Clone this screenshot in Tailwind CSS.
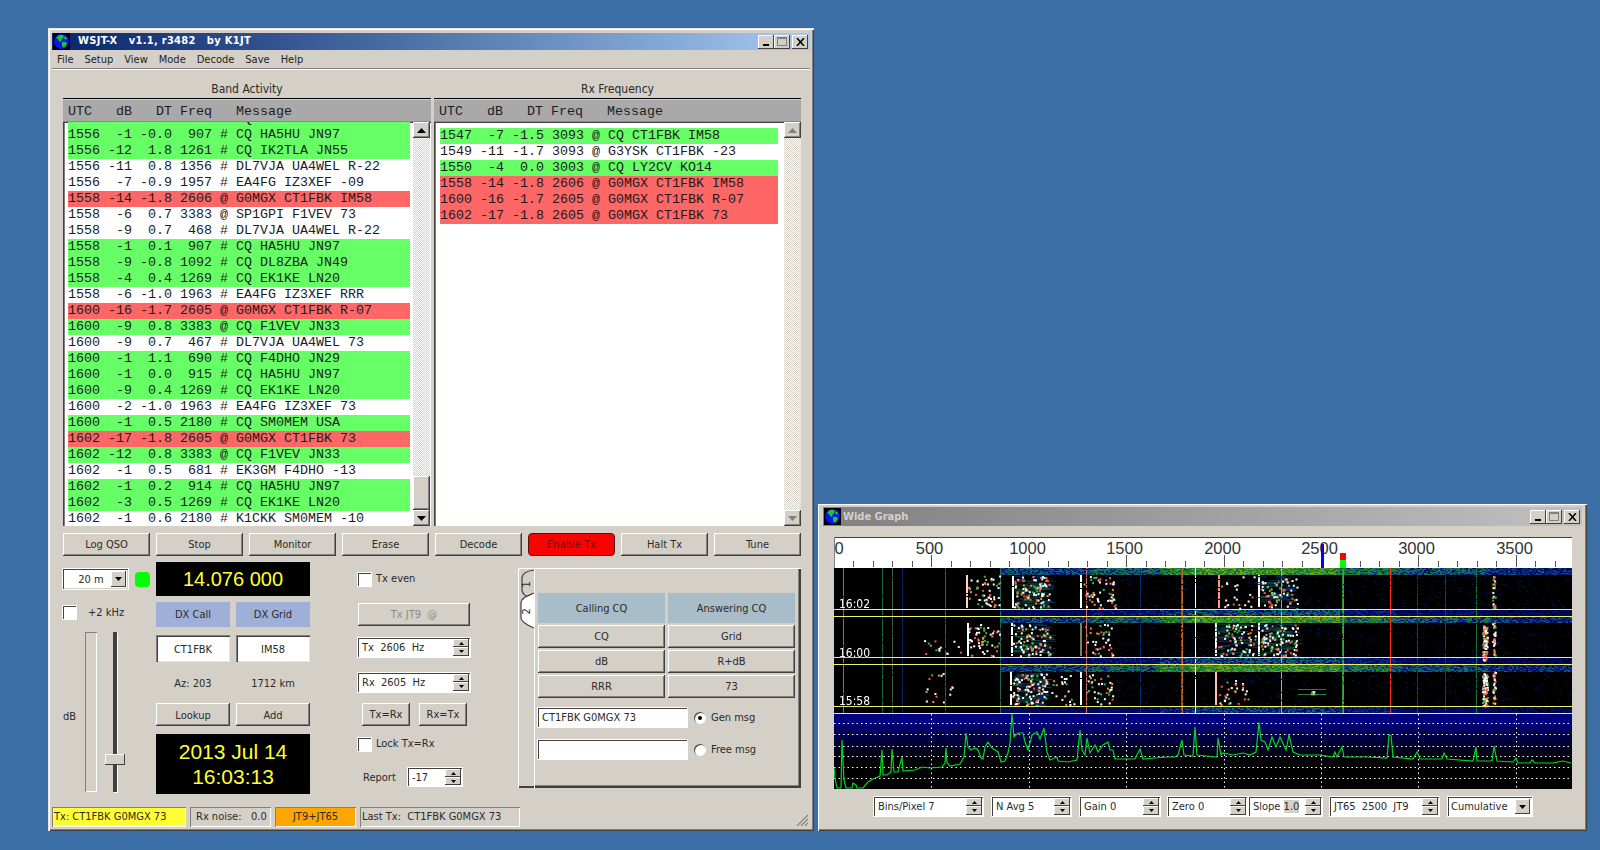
<!DOCTYPE html>
<html lang="en">
<head>
  <meta charset="UTF-8" />
  <title>WSJT-X v1.1, r3482 by K1JT</title>
  <script src="https://cdn.jsdelivr.net/npm/@tailwindcss/browser@4"></script>
</head>
<body class="relative h-[850px] w-[1600px] overflow-hidden bg-[#3a6ea5] font-['DejaVu_Sans_Condensed','Liberation_Sans',sans-serif] text-[11px] text-[#2a2a2a]">

  <!-- main window -->
  <div class="absolute left-[48px] top-[28px] flex h-[803px] w-[766px] flex-col bg-[#d4d0c8] pl-[4px] pr-[4px] pt-[5px] shadow-[inset_1px_1px_0_#e8e6e0,inset_2px_2px_0_#fff,inset_-1px_-1px_0_#404040,inset_-2px_-2px_0_#808080]">
    <div class="flex h-[17px] items-center bg-linear-to-r from-[#0a246a] to-[#a6caf0] pr-[2px]">
      <svg class="ml-[1px] h-[17px] w-[17px]" viewBox="0 0 17 17"><rect width="17" height="17" fill="#000"/><circle cx="8.5" cy="8.5" r="7.5" fill="#0a14e0"/><path d="M3 5l3-3 4 0 1 2-2 2-1 3-2-1-1-2zM9 9l4 0 1 2-3 4-2-2zM12 3l2 2-1 2-2-2z" fill="#16c832"/></svg>
      <span class="ml-[8px] whitespace-pre text-[11px] font-bold tracking-[0.3px] text-white">WSJT-X   v1.1, r3482   by K1JT</span>
      <div class="ml-auto flex">
        <div class="flex h-[14px] w-[16px] items-end justify-center bg-[#d4d0c8] pb-[3px] shadow-[inset_-1px_-1px_0_#404040,inset_1px_1px_0_#fff]"><div class="h-[2px] w-[6px] bg-black"></div></div>
        <div class="flex h-[14px] w-[16px] items-center justify-center bg-[#d4d0c8] shadow-[inset_-1px_-1px_0_#404040,inset_1px_1px_0_#fff]"><div class="h-[9px] w-[10px] border border-t-2 border-[#808080]"></div></div>
        <div class="ml-[2px] flex h-[14px] w-[16px] items-center justify-center bg-[#d4d0c8] shadow-[inset_-1px_-1px_0_#404040,inset_1px_1px_0_#fff]"><svg width="9" height="8" viewBox="0 0 9 8"><path d="M1 0l7 8M8 0l-7 8" stroke="#000" stroke-width="1.5"/></svg></div>
      </div>
    </div>
    <div class="flex h-[19px] items-center gap-[11px] border-b border-b-[#808080] pl-[5px] pt-[3px] text-[#222] shadow-[0_1px_0_#fff]">
      <span>File</span><span>Setup</span><span>View</span><span>Mode</span><span>Decode</span><span>Save</span><span>Help</span>
    </div>

    <div class="flex flex-1 flex-col pl-[11px] pr-[9px]">
      <div class="mt-[10px] flex h-[19px] items-center text-[12px]">
        <div class="w-[368px] text-center">Band Activity</div>
        <div class="ml-[3px] w-[367px] text-center">Rx Frequency</div>
      </div>

      <!-- decode tables -->
      <div class="flex h-[428px] gap-[3px] font-['Liberation_Mono',monospace] text-[13.33px] leading-[16px] text-[#1c1c1c]">
        <div class="flex w-[368px] flex-col border-t border-t-black">
          <div class="flex h-[23px] items-center whitespace-pre bg-[#a9a9a9] pl-[5px] pt-[2px] shadow-[inset_0_1px_0_#d4d0c8,inset_0_-1px_0_#8a8a8a]">UTC   dB   DT Freq   Message</div>
          <div class="flex min-h-0 flex-1 bg-white shadow-[inset_1px_1px_0_#404040,inset_2px_0_0_#808080]">
            <div class="ml-[5px] flex w-[342px] flex-col overflow-hidden whitespace-pre">
              <div class="mt-[-11px] flex shrink-0 flex-col">
                <div class="bg-[#66ff66]">1556  -9  0.4 1269 # CQ EK1KE LN20</div>
                <div class="bg-[#66ff66]">1556  -1 -0.0  907 # CQ HA5HU JN97</div>
                <div class="bg-[#66ff66]">1556 -12  1.8 1261 # CQ IK2TLA JN55</div>
                <div>1556 -11  0.8 1356 # DL7VJA UA4WEL R-22</div>
                <div>1556  -7 -0.9 1957 # EA4FG IZ3XEF -09</div>
                <div class="bg-[#ff6666]">1558 -14 -1.8 2606 @ G0MGX CT1FBK IM58</div>
                <div>1558  -6  0.7 3383 @ SP1GPI F1VEV 73</div>
                <div>1558  -9  0.7  468 # DL7VJA UA4WEL R-22</div>
                <div class="bg-[#66ff66]">1558  -1  0.1  907 # CQ HA5HU JN97</div>
                <div class="bg-[#66ff66]">1558  -9 -0.8 1092 # CQ DL8ZBA JN49</div>
                <div class="bg-[#66ff66]">1558  -4  0.4 1269 # CQ EK1KE LN20</div>
                <div>1558  -6 -1.0 1963 # EA4FG IZ3XEF RRR</div>
                <div class="bg-[#ff6666]">1600 -16 -1.7 2605 @ G0MGX CT1FBK R-07</div>
                <div class="bg-[#66ff66]">1600  -9  0.8 3383 @ CQ F1VEV JN33</div>
                <div>1600  -9  0.7  467 # DL7VJA UA4WEL 73</div>
                <div class="bg-[#66ff66]">1600  -1  1.1  690 # CQ F4DHO JN29</div>
                <div class="bg-[#66ff66]">1600  -1  0.0  915 # CQ HA5HU JN97</div>
                <div class="bg-[#66ff66]">1600  -9  0.4 1269 # CQ EK1KE LN20</div>
                <div>1600  -2 -1.0 1963 # EA4FG IZ3XEF 73</div>
                <div class="bg-[#66ff66]">1600  -1  0.5 2180 # CQ SM0MEM USA</div>
                <div class="bg-[#ff6666]">1602 -17 -1.8 2605 @ G0MGX CT1FBK 73</div>
                <div class="bg-[#66ff66]">1602 -12  0.8 3383 @ CQ F1VEV JN33</div>
                <div>1602  -1  0.5  681 # EK3GM F4DHO -13</div>
                <div class="bg-[#66ff66]">1602  -1  0.2  914 # CQ HA5HU JN97</div>
                <div class="bg-[#66ff66]">1602  -3  0.5 1269 # CQ EK1KE LN20</div>
                <div>1602  -1  0.6 2180 # K1CKK SM0MEM -10</div>
              </div>
            </div>
            <div class="ml-auto mr-[1px] flex w-[17px] flex-col bg-[repeating-conic-gradient(#fff_0_25%,#d4d0c8_0_50%)] bg-[length:2px_2px]">
              <div class="flex h-[16px] items-center justify-center bg-[#d4d0c8] shadow-[inset_-1px_-1px_0_#404040,inset_1px_1px_0_#fff,inset_-2px_-2px_0_#808080]"><svg width="9" height="5"><path d="M4.5 0L9 5H0z" fill="#000"/></svg></div>
              <div class="flex-1"></div>
              <div class="h-[34px] bg-[#d4d0c8] shadow-[inset_-1px_-1px_0_#404040,inset_1px_1px_0_#fff,inset_-2px_-2px_0_#808080]"></div>
              <div class="flex h-[16px] items-center justify-center bg-[#d4d0c8] shadow-[inset_-1px_-1px_0_#404040,inset_1px_1px_0_#fff,inset_-2px_-2px_0_#808080]"><svg width="9" height="5"><path d="M4.5 5L9 0H0z" fill="#000"/></svg></div>
            </div>
          </div>
        </div>

        <div class="flex w-[367px] flex-col border-t border-t-black">
          <div class="flex h-[23px] items-center whitespace-pre bg-[#a9a9a9] pl-[5px] pt-[2px] shadow-[inset_0_1px_0_#d4d0c8,inset_0_-1px_0_#8a8a8a]">UTC   dB   DT Freq   Message</div>
          <div class="flex min-h-0 flex-1 bg-white shadow-[inset_1px_1px_0_#404040,inset_2px_0_0_#808080]">
            <div class="ml-[6px] mt-[6px] flex h-[96px] w-[338px] flex-col whitespace-pre">
              <div class="bg-[#66ff66]">1547  -7 -1.5 3093 @ CQ CT1FBK IM58</div>
              <div>1549 -11 -1.7 3093 @ G3YSK CT1FBK -23</div>
              <div class="bg-[#66ff66]">1550  -4  0.0 3003 @ CQ LY2CV KO14</div>
              <div class="bg-[#ff6666]">1558 -14 -1.8 2606 @ G0MGX CT1FBK IM58</div>
              <div class="bg-[#ff6666]">1600 -16 -1.7 2605 @ G0MGX CT1FBK R-07</div>
              <div class="bg-[#ff6666]">1602 -17 -1.8 2605 @ G0MGX CT1FBK 73</div>
            </div>
            <div class="ml-auto flex w-[17px] flex-col bg-[repeating-conic-gradient(#fff_0_25%,#d4d0c8_0_50%)] bg-[length:2px_2px]">
              <div class="flex h-[16px] items-center justify-center bg-[#d4d0c8] shadow-[inset_-1px_-1px_0_#404040,inset_1px_1px_0_#fff,inset_-2px_-2px_0_#808080]"><svg width="9" height="5"><path d="M4.5 0L9 5H0z" fill="#808080"/></svg></div>
              <div class="flex-1"></div>
              <div class="flex h-[16px] items-center justify-center bg-[#d4d0c8] shadow-[inset_-1px_-1px_0_#404040,inset_1px_1px_0_#fff,inset_-2px_-2px_0_#808080]"><svg width="9" height="5"><path d="M4.5 5L9 0H0z" fill="#808080"/></svg></div>
            </div>
          </div>
        </div>
      </div>

      <!-- button row -->
      <div class="mt-[7px] grid h-[23px] grid-cols-8 gap-[6px]">
        <div class="flex items-center justify-center bg-[#d4d0c8] pt-[2px] shadow-[inset_-1px_-1px_0_#404040,inset_1px_1px_0_#fff,inset_-2px_-2px_0_#808080]">Log QSO</div>
        <div class="flex items-center justify-center bg-[#d4d0c8] pt-[2px] shadow-[inset_-1px_-1px_0_#404040,inset_1px_1px_0_#fff,inset_-2px_-2px_0_#808080]">Stop</div>
        <div class="flex items-center justify-center bg-[#d4d0c8] pt-[2px] shadow-[inset_-1px_-1px_0_#404040,inset_1px_1px_0_#fff,inset_-2px_-2px_0_#808080]">Monitor</div>
        <div class="flex items-center justify-center bg-[#d4d0c8] pt-[2px] shadow-[inset_-1px_-1px_0_#404040,inset_1px_1px_0_#fff,inset_-2px_-2px_0_#808080]">Erase</div>
        <div class="flex items-center justify-center bg-[#d4d0c8] pt-[2px] shadow-[inset_-1px_-1px_0_#404040,inset_1px_1px_0_#fff,inset_-2px_-2px_0_#808080]">Decode</div>
        <div class="flex items-center justify-center rounded-[4px] border border-[#5a1010] bg-[#ff0000] pt-[2px] text-[#6a1010]">Enable Tx</div>
        <div class="flex items-center justify-center bg-[#d4d0c8] pt-[2px] shadow-[inset_-1px_-1px_0_#404040,inset_1px_1px_0_#fff,inset_-2px_-2px_0_#808080]">Halt Tx</div>
        <div class="flex items-center justify-center bg-[#d4d0c8] pt-[2px] shadow-[inset_-1px_-1px_0_#404040,inset_1px_1px_0_#fff,inset_-2px_-2px_0_#808080]">Tune</div>
      </div>

      <!-- lower controls -->
      <div class="mt-[6px] flex h-[240px]">
        <div class="flex w-[87px] flex-col">
          <div class="mt-[7px] flex items-center">
            <div class="flex h-[20px] w-[65px] items-center bg-white shadow-[inset_1px_1px_0_#404040,inset_-1px_-1px_0_#d4d0c8,0_0_0_1px_#fff]">
              <span class="flex-1 pl-[8px] pt-[2px] text-center">20 m</span>
              <div class="mr-[2px] flex h-[16px] w-[15px] items-center justify-center bg-[#d4d0c8] shadow-[inset_-1px_-1px_0_#404040,inset_1px_1px_0_#fff]"><svg width="7" height="4"><path d="M0 0h7L3.5 4z" fill="#000"/></svg></div>
            </div>
            <div class="ml-[7px] h-[15px] w-[15px] rounded-[4px] bg-[#00ff00]"></div>
          </div>
          <div class="mt-[16px] flex h-[15px] items-center">
            <div class="h-[13px] w-[13px] bg-white shadow-[inset_1px_1px_0_#404040,0_0_0_1px_#fff]"></div>
            <span class="ml-[12px] pt-[1px]">+2 kHz</span>
          </div>
          <div class="mt-[12px] flex h-[160px] items-stretch">
            <div class="flex w-[22px] items-center pt-[10px]">dB</div>
            <div class="h-full w-[12px] shadow-[inset_1px_1px_0_#808080,inset_-1px_-1px_0_#fff]"></div>
            <div class="relative ml-[16px] h-full w-[4px] bg-[#404040] shadow-[1px_1px_0_#fff]">
              <div class="absolute left-[-8px] top-[122px] h-[11px] w-[20px] bg-[#d4d0c8] shadow-[inset_-1px_-1px_0_#404040,inset_1px_1px_0_#fff]"></div>
            </div>
          </div>
        </div>

        <div class="ml-[6px] flex w-[154px] flex-col">
          <div class="flex h-[34px] items-center justify-center bg-black font-['Liberation_Sans',sans-serif] text-[20px] text-[#ffff33]">14.076 000</div>
          <div class="mt-[6px] flex h-[25px] gap-[6px]">
            <div class="flex w-[74px] items-center justify-center bg-[#9eb0d8] pt-[2px]">DX Call</div>
            <div class="flex w-[74px] items-center justify-center bg-[#9eb0d8] pt-[2px]">DX Grid</div>
          </div>
          <div class="mt-[8px] flex h-[27px] gap-[6px]">
            <div class="flex w-[74px] items-center justify-center bg-white pt-[3px] shadow-[inset_1px_1px_0_#808080,inset_2px_2px_0_#404040,inset_-1px_-1px_0_#e8e6e0]">CT1FBK</div>
            <div class="flex w-[74px] items-center justify-center bg-white pt-[3px] shadow-[inset_1px_1px_0_#808080,inset_2px_2px_0_#404040,inset_-1px_-1px_0_#e8e6e0]">IM58</div>
          </div>
          <div class="flex h-[41px] gap-[6px]">
            <div class="flex w-[74px] items-center justify-center pt-[3px]">Az: 203</div>
            <div class="flex w-[74px] items-center justify-center pt-[3px]">1712 km</div>
          </div>
          <div class="flex h-[23px] gap-[6px]">
            <div class="flex w-[74px] items-center justify-center bg-[#d4d0c8] pt-[3px] shadow-[inset_-1px_-1px_0_#404040,inset_1px_1px_0_#fff,inset_-2px_-2px_0_#808080]">Lookup</div>
            <div class="flex w-[74px] items-center justify-center bg-[#d4d0c8] pt-[3px] shadow-[inset_-1px_-1px_0_#404040,inset_1px_1px_0_#fff,inset_-2px_-2px_0_#808080]">Add</div>
          </div>
          <div class="mt-[8px] flex h-[60px] flex-col items-center justify-center bg-black font-['Liberation_Sans',sans-serif] text-[21px] leading-[25px] text-[#ffff33]">
            <div>2013 Jul 14</div>
            <div>16:03:13</div>
          </div>
        </div>

        <div class="ml-[48px] flex w-[112px] flex-col">
          <div class="mt-[11px] flex h-[13px] items-center">
            <div class="h-[13px] w-[13px] bg-white shadow-[inset_1px_1px_0_#404040,0_0_0_1px_#fff]"></div>
            <span class="ml-[5px]">Tx even</span>
          </div>
          <div class="mt-[17px] flex h-[23px] items-center justify-center whitespace-pre bg-[#d4d0c8] pt-[2px] text-[#8a8a8a] shadow-[inset_-1px_-1px_0_#404040,inset_1px_1px_0_#fff,inset_-2px_-2px_0_#808080]">Tx JT9  @</div>
          <div class="mt-[12px] flex h-[19px] items-center bg-white shadow-[inset_1px_1px_0_#404040,0_0_0_1px_#fff]">
            <span class="flex-1 whitespace-pre pl-[4px] pt-[2px]">Tx  2606  Hz</span>
            <div class="mr-[1px] flex w-[16px] flex-col">
              <div class="flex h-[8px] items-center justify-center bg-[#d4d0c8] shadow-[inset_-1px_-1px_0_#404040,inset_1px_1px_0_#fff]"><svg width="5" height="3"><path d="M2.5 0L5 3H0z" fill="#000"/></svg></div>
              <div class="flex h-[9px] items-center justify-center bg-[#d4d0c8] shadow-[inset_-1px_-1px_0_#404040,inset_1px_1px_0_#fff]"><svg width="5" height="3"><path d="M2.5 3L5 0H0z" fill="#000"/></svg></div>
            </div>
          </div>
          <div class="mt-[16px] flex h-[19px] items-center bg-white shadow-[inset_1px_1px_0_#404040,0_0_0_1px_#fff]">
            <span class="flex-1 whitespace-pre pl-[4px] pt-[2px]">Rx  2605  Hz</span>
            <div class="mr-[1px] flex w-[16px] flex-col">
              <div class="flex h-[8px] items-center justify-center bg-[#d4d0c8] shadow-[inset_-1px_-1px_0_#404040,inset_1px_1px_0_#fff]"><svg width="5" height="3"><path d="M2.5 0L5 3H0z" fill="#000"/></svg></div>
              <div class="flex h-[9px] items-center justify-center bg-[#d4d0c8] shadow-[inset_-1px_-1px_0_#404040,inset_1px_1px_0_#fff]"><svg width="5" height="3"><path d="M2.5 3L5 0H0z" fill="#000"/></svg></div>
            </div>
          </div>
          <div class="mt-[11px] flex h-[23px] gap-[9px] pl-[4px]">
            <div class="flex w-[48px] items-center justify-center bg-[#d4d0c8] pt-[2px] shadow-[inset_-1px_-1px_0_#404040,inset_1px_1px_0_#fff,inset_-2px_-2px_0_#808080]">Tx=Rx</div>
            <div class="flex w-[48px] items-center justify-center bg-[#d4d0c8] pt-[2px] shadow-[inset_-1px_-1px_0_#404040,inset_1px_1px_0_#fff,inset_-2px_-2px_0_#808080]">Rx=Tx</div>
          </div>
          <div class="mt-[12px] flex h-[13px] items-center">
            <div class="h-[13px] w-[13px] bg-white shadow-[inset_1px_1px_0_#404040,0_0_0_1px_#fff]"></div>
            <span class="ml-[5px]">Lock Tx=Rx</span>
          </div>
          <div class="mt-[17px] flex items-center">
            <span class="ml-[5px] w-[45px] pt-[2px]">Report</span>
            <div class="flex h-[18px] w-[54px] items-center bg-white shadow-[inset_1px_1px_0_#404040,0_0_0_1px_#fff]">
              <span class="flex-1 pl-[4px] pt-[2px]">-17</span>
              <div class="mr-[1px] flex w-[16px] flex-col">
                <div class="flex h-[8px] items-center justify-center bg-[#d4d0c8] shadow-[inset_-1px_-1px_0_#404040,inset_1px_1px_0_#fff]"><svg width="5" height="3"><path d="M2.5 0L5 3H0z" fill="#000"/></svg></div>
                <div class="flex h-[8px] items-center justify-center bg-[#d4d0c8] shadow-[inset_-1px_-1px_0_#404040,inset_1px_1px_0_#fff]"><svg width="5" height="3"><path d="M2.5 3L5 0H0z" fill="#000"/></svg></div>
              </div>
            </div>
          </div>
        </div>

        <!-- message tab widget -->
        <div class="ml-[48px] mt-[6px] flex h-[220px] w-[283px] shadow-[inset_1px_1px_0_#fff,inset_-1px_-1px_0_#404040]">
          <div class="relative w-[16px] shrink-0 shadow-[inset_1px_1px_0_#fff,inset_0_-2px_0_#404040]">
            <svg class="absolute left-0 top-0" width="17" height="64" viewBox="0 0 17 64">
              <path d="M16 2C9 3 4 6 4 10V22C4 26 9 29 12 30" fill="#d4d0c8" stroke="#404040" stroke-width="1.2"/>
              <path d="M16 25C9 28 3 30 3 35V50C3 54 9 57 16 60V25z" fill="#fff"/>
              <path d="M16 25C9 28 3 30 3 35V50C3 54 9 57 16 60" fill="none" stroke="#404040" stroke-width="1.2"/>
            </svg>
            <span class="absolute left-[6px] top-[8px] -rotate-90">1</span>
            <span class="absolute left-[6px] top-[35px] -rotate-90">2</span>
          </div>
          <div class="flex flex-1 flex-col pl-[4px] pr-[5px] pt-[25px] shadow-[inset_1px_1px_0_#fff,inset_-2px_-2px_0_#404040,inset_-3px_-3px_0_#808080]">
            <div class="flex h-[30px] gap-[3px]">
              <div class="flex w-[127px] items-center justify-center bg-[#a9bdc8] pt-[2px]">Calling CQ</div>
              <div class="flex w-[127px] items-center justify-center bg-[#a9bdc8] pt-[2px]">Answering CQ</div>
            </div>
            <div class="mt-[2px] grid auto-rows-[23px] grid-cols-[127px_127px] gap-x-[3px] gap-y-[2px]">
              <div class="flex items-center justify-center bg-[#d4d0c8] pt-[2px] shadow-[inset_-1px_-1px_0_#404040,inset_1px_1px_0_#fff,inset_-2px_-2px_0_#808080]">CQ</div>
              <div class="flex items-center justify-center bg-[#d4d0c8] pt-[2px] shadow-[inset_-1px_-1px_0_#404040,inset_1px_1px_0_#fff,inset_-2px_-2px_0_#808080]">Grid</div>
              <div class="flex items-center justify-center bg-[#d4d0c8] pt-[2px] shadow-[inset_-1px_-1px_0_#404040,inset_1px_1px_0_#fff,inset_-2px_-2px_0_#808080]">dB</div>
              <div class="flex items-center justify-center bg-[#d4d0c8] pt-[2px] shadow-[inset_-1px_-1px_0_#404040,inset_1px_1px_0_#fff,inset_-2px_-2px_0_#808080]">R+dB</div>
              <div class="flex items-center justify-center bg-[#d4d0c8] pt-[2px] shadow-[inset_-1px_-1px_0_#404040,inset_1px_1px_0_#fff,inset_-2px_-2px_0_#808080]">RRR</div>
              <div class="flex items-center justify-center bg-[#d4d0c8] pt-[2px] shadow-[inset_-1px_-1px_0_#404040,inset_1px_1px_0_#fff,inset_-2px_-2px_0_#808080]">73</div>
            </div>
            <div class="mt-[10px] flex h-[19px] items-center">
              <div class="flex h-full w-[149px] items-center bg-white pl-[4px] pt-[2px] shadow-[inset_1px_1px_0_#404040,0_0_0_1px_#fff]">CT1FBK G0MGX 73</div>
              <div class="ml-[7px] flex h-[12px] w-[12px] items-center justify-center rounded-full bg-white shadow-[inset_1px_1px_0_#404040]"><div class="h-[4px] w-[4px] rounded-full bg-black"></div></div>
              <span class="ml-[5px] pt-[2px]">Gen msg</span>
            </div>
            <div class="mt-[13px] flex h-[19px] items-center">
              <div class="h-full w-[149px] bg-white shadow-[inset_1px_1px_0_#404040,0_0_0_1px_#fff]"></div>
              <div class="ml-[7px] h-[12px] w-[12px] rounded-full bg-white shadow-[inset_1px_1px_0_#404040]"></div>
              <span class="ml-[5px] pt-[2px]">Free msg</span>
            </div>
          </div>
        </div>
      </div>
    </div>

    <!-- status bar -->
    <div class="relative mb-[4px] flex h-[20px] gap-[4px]">
      <div class="flex w-[134px] items-center whitespace-pre bg-[#ffff33] pl-[2px] shadow-[inset_1px_1px_0_#808080,inset_-1px_-1px_0_#fff]">Tx: CT1FBK G0MGX 73</div>
      <div class="flex w-[81px] items-center whitespace-pre pl-[6px] shadow-[inset_1px_1px_0_#808080,inset_-1px_-1px_0_#fff]">Rx noise:   0.0</div>
      <div class="flex w-[81px] items-center justify-center whitespace-pre bg-[#ffa500] shadow-[inset_1px_1px_0_#808080,inset_-1px_-1px_0_#fff]">JT9+JT65</div>
      <div class="flex w-[160px] items-center whitespace-pre pl-[2px] shadow-[inset_1px_1px_0_#808080,inset_-1px_-1px_0_#fff]">Last Tx:  CT1FBK G0MGX 73</div>
      <svg class="absolute bottom-[1px] right-[2px]" width="12" height="12" viewBox="0 0 12 12"><path d="M12 1L1 12M12 5L5 12M12 9L9 12" stroke="#808080" stroke-width="1.2"/></svg>
    </div>
  </div>

  <!-- wide graph window -->
  <div class="absolute left-[818px] top-[504px] flex h-[327px] w-[769px] flex-col bg-[#d4d0c8] px-[5px] pt-[3px] shadow-[inset_1px_1px_0_#fff,inset_-1px_-1px_0_#404040,inset_-2px_-2px_0_#808080]">
    <div class="flex h-[19px] shrink-0 items-center bg-linear-to-r from-[#808080] to-[#c0c0c0] pr-[2px]">
      <svg class="ml-[1px] h-[17px] w-[17px]" viewBox="0 0 17 17"><rect width="17" height="17" fill="#000"/><circle cx="8.5" cy="8.5" r="7.5" fill="#0a14e0"/><path d="M3 5l3-3 4 0 1 2-2 2-1 3-2-1-1-2zM9 9l4 0 1 2-3 4-2-2zM12 3l2 2-1 2-2-2z" fill="#16c832"/></svg>
      <span class="ml-[2px] pt-[2px] font-bold text-[#d4d0c8]">Wide Graph</span>
      <div class="ml-auto flex">
        <div class="flex h-[14px] w-[16px] items-end justify-center bg-[#d4d0c8] pb-[3px] shadow-[inset_-1px_-1px_0_#404040,inset_1px_1px_0_#fff]"><div class="h-[2px] w-[6px] bg-black"></div></div>
        <div class="flex h-[14px] w-[16px] items-center justify-center bg-[#d4d0c8] shadow-[inset_-1px_-1px_0_#404040,inset_1px_1px_0_#fff]"><div class="h-[9px] w-[10px] border border-t-2 border-[#808080]"></div></div>
        <div class="ml-[2px] flex h-[14px] w-[16px] items-center justify-center bg-[#d4d0c8] shadow-[inset_-1px_-1px_0_#404040,inset_1px_1px_0_#fff]"><svg width="9" height="8" viewBox="0 0 9 8"><path d="M1 0l7 8M8 0l-7 8" stroke="#000" stroke-width="1.5"/></svg></div>
      </div>
    </div>

    <div class="relative ml-[11px] mt-[11px] w-[738px]">
      <svg id="scale" class="block bg-white" width="738" height="31" viewBox="0 0 738 31" font-family="Liberation Sans, sans-serif" font-size="16.5" fill="#333"></svg>
      <canvas id="waterfall" class="block" width="738" height="146"></canvas>
      <span class="absolute left-[5px] top-[58px] text-[12px] text-white [text-shadow:0_0_2px_#000]">16:02</span>
      <span class="absolute left-[5px] top-[107px] text-[12px] text-white [text-shadow:0_0_2px_#000]">16:00</span>
      <span class="absolute left-[5px] top-[155px] text-[12px] text-white [text-shadow:0_0_2px_#000]">15:58</span>
      <div class="h-[75px] bg-linear-to-b from-[#000080] from-[10%] to-black to-[72%]">
        <svg id="spectrum" class="block" width="738" height="75" viewBox="0 0 738 75"></svg>
      </div>
    </div>

    <!-- wide graph controls -->
    <div class="ml-[51px] mt-[8px] flex h-[19px]">
      <div class="flex w-[109px] items-center bg-white shadow-[inset_1px_1px_0_#404040,0_0_0_1px_#fff]">
        <span class="flex-1 pl-[4px] pt-[2px]">Bins/Pixel 7</span>
        <div class="mr-[1px] flex w-[16px] flex-col">
          <div class="flex h-[8px] items-center justify-center bg-[#d4d0c8] shadow-[inset_-1px_-1px_0_#404040,inset_1px_1px_0_#fff]"><svg width="5" height="3"><path d="M2.5 0L5 3H0z" fill="#000"/></svg></div>
          <div class="flex h-[9px] items-center justify-center bg-[#d4d0c8] shadow-[inset_-1px_-1px_0_#404040,inset_1px_1px_0_#fff]"><svg width="5" height="3"><path d="M2.5 3L5 0H0z" fill="#000"/></svg></div>
        </div>
      </div>
      <div class="ml-[9px] flex w-[79px] items-center bg-white shadow-[inset_1px_1px_0_#404040,0_0_0_1px_#fff]">
        <span class="flex-1 pl-[4px] pt-[2px]">N Avg 5</span>
        <div class="mr-[1px] flex w-[16px] flex-col">
          <div class="flex h-[8px] items-center justify-center bg-[#d4d0c8] shadow-[inset_-1px_-1px_0_#404040,inset_1px_1px_0_#fff]"><svg width="5" height="3"><path d="M2.5 0L5 3H0z" fill="#000"/></svg></div>
          <div class="flex h-[9px] items-center justify-center bg-[#d4d0c8] shadow-[inset_-1px_-1px_0_#404040,inset_1px_1px_0_#fff]"><svg width="5" height="3"><path d="M2.5 3L5 0H0z" fill="#000"/></svg></div>
        </div>
      </div>
      <div class="ml-[9px] flex w-[80px] items-center bg-white shadow-[inset_1px_1px_0_#404040,0_0_0_1px_#fff]">
        <span class="flex-1 pl-[4px] pt-[2px]">Gain 0</span>
        <div class="mr-[1px] flex w-[16px] flex-col">
          <div class="flex h-[8px] items-center justify-center bg-[#d4d0c8] shadow-[inset_-1px_-1px_0_#404040,inset_1px_1px_0_#fff]"><svg width="5" height="3"><path d="M2.5 0L5 3H0z" fill="#000"/></svg></div>
          <div class="flex h-[9px] items-center justify-center bg-[#d4d0c8] shadow-[inset_-1px_-1px_0_#404040,inset_1px_1px_0_#fff]"><svg width="5" height="3"><path d="M2.5 3L5 0H0z" fill="#000"/></svg></div>
        </div>
      </div>
      <div class="ml-[8px] flex w-[79px] items-center bg-white shadow-[inset_1px_1px_0_#404040,0_0_0_1px_#fff]">
        <span class="flex-1 pl-[4px] pt-[2px]">Zero 0</span>
        <div class="mr-[1px] flex w-[16px] flex-col">
          <div class="flex h-[8px] items-center justify-center bg-[#d4d0c8] shadow-[inset_-1px_-1px_0_#404040,inset_1px_1px_0_#fff]"><svg width="5" height="3"><path d="M2.5 0L5 3H0z" fill="#000"/></svg></div>
          <div class="flex h-[9px] items-center justify-center bg-[#d4d0c8] shadow-[inset_-1px_-1px_0_#404040,inset_1px_1px_0_#fff]"><svg width="5" height="3"><path d="M2.5 3L5 0H0z" fill="#000"/></svg></div>
        </div>
      </div>
      <div class="ml-[2px] flex w-[73px] items-center bg-white shadow-[inset_1px_1px_0_#404040,0_0_0_1px_#fff]">
        <span class="flex-1 pl-[4px] pt-[2px]">Slope <span class="bg-[#d4d0c8]">1.0</span></span>
        <div class="mr-[1px] flex w-[16px] flex-col">
          <div class="flex h-[8px] items-center justify-center bg-[#d4d0c8] shadow-[inset_-1px_-1px_0_#404040,inset_1px_1px_0_#fff]"><svg width="5" height="3"><path d="M2.5 0L5 3H0z" fill="#000"/></svg></div>
          <div class="flex h-[9px] items-center justify-center bg-[#d4d0c8] shadow-[inset_-1px_-1px_0_#404040,inset_1px_1px_0_#fff]"><svg width="5" height="3"><path d="M2.5 3L5 0H0z" fill="#000"/></svg></div>
        </div>
      </div>
      <div class="ml-[8px] flex w-[109px] items-center bg-white shadow-[inset_1px_1px_0_#404040,0_0_0_1px_#fff]">
        <span class="flex-1 whitespace-pre pl-[4px] pt-[2px]">JT65  2500  JT9</span>
        <div class="mr-[1px] flex w-[16px] flex-col">
          <div class="flex h-[8px] items-center justify-center bg-[#d4d0c8] shadow-[inset_-1px_-1px_0_#404040,inset_1px_1px_0_#fff]"><svg width="5" height="3"><path d="M2.5 0L5 3H0z" fill="#000"/></svg></div>
          <div class="flex h-[9px] items-center justify-center bg-[#d4d0c8] shadow-[inset_-1px_-1px_0_#404040,inset_1px_1px_0_#fff]"><svg width="5" height="3"><path d="M2.5 3L5 0H0z" fill="#000"/></svg></div>
        </div>
      </div>
      <div class="ml-[9px] flex w-[84px] items-center bg-white shadow-[inset_1px_1px_0_#404040,0_0_0_1px_#fff]">
        <span class="flex-1 pl-[3px] pt-[1px]">Cumulative</span>
        <div class="mr-[2px] flex h-[15px] w-[15px] items-center justify-center bg-[#d4d0c8] shadow-[inset_-1px_-1px_0_#404040,inset_1px_1px_0_#fff]"><svg width="7" height="4"><path d="M0 0h7L3.5 4z" fill="#000"/></svg></div>
      </div>
    </div>
  </div>

  <script>
    // frequency to pixel offset inside the graph, 500 Hz is 97.4 px
    const X0 = 834;
    const fx = f => f * 0.1948;
    const NS = 'http://www.w3.org/2000/svg';

    function add(svg, tag, attrs, text) {
      const el = document.createElementNS(NS, tag);
      for (const k in attrs) el.setAttribute(k, attrs[k]);
      if (text) el.textContent = text;
      svg.appendChild(el);
    }

    // ruler
    const scale = document.getElementById('scale');
    add(scale, 'rect', { width: 738, height: 1, fill: '#404040' });
    add(scale, 'rect', { width: 1, height: 31, fill: '#808080' });
    for (let f = 0; f <= 3700; f += 100) {
      const x = Math.round(fx(f)) + 0.5;
      const major = f % 500 === 0;
      if (f > 0) add(scale, 'line', { x1: x, x2: x, y1: major ? 18 : 24, y2: 30, stroke: '#555' });
      if (major) add(scale, 'text', { x: f === 0 ? 5 : x - 2, y: 17, 'text-anchor': 'middle' }, String(f));
    }
    add(scale, 'rect', { x: 487, y: 7, width: 3, height: 24, fill: '#0000ff' });
    add(scale, 'rect', { x: 506, y: 16, width: 6, height: 7, fill: '#ff0000' });
    add(scale, 'rect', { x: 506, y: 23, width: 6, height: 8, fill: '#00ff00' });

    // waterfall, seeded so it draws the same every time
    let seed = 12345;
    function rnd() {
      seed = (seed * 1664525 + 1013904223) >>> 0;
      return seed / 4294967296;
    }
    const ctx = document.getElementById('waterfall').getContext('2d');
    ctx.fillStyle = '#000';
    ctx.fillRect(0, 0, 738, 146);

    function colour(v) {
      if (v < 0.12) return '#000010';
      if (v < 0.3) return '#000a60';
      if (v < 0.42) return '#0a2a80';
      if (v < 0.55) return '#106070';
      if (v < 0.72) return '#1a7a30';
      if (v < 0.95) return '#2f9020';
      return '#70a020';
    }
    function noiseLevel(x) {
      const a = x + X0;
      if (a < 1000) return 0.04;
      if (a < 1090) return 0.45;
      if (a < 1160) return 0.55;
      if (a < 1190) return 0.8;
      if (a < 1340) return 0.95;
      if (a < 1395) return 0.66;
      if (a < 1490) return 0.5;
      return 0.38;
    }
    function band(y1, y2, k) {
      for (let y = y1; y < y2; y++) {
        for (let x = 0; x < 738; x += 2) {
          const v = noiseLevel(x) * k * (0.45 + rnd() * 0.8);
          if (v < 0.1) continue;
          ctx.fillStyle = colour(v);
          ctx.fillRect(x, y, 2, 1);
        }
      }
    }
    // faint background speckle
    for (let i = 0; i < 1800; i++) {
      const x = Math.floor(rnd() * 738), y = Math.floor(rnd() * 146);
      if (x + X0 > 1100) {
        ctx.fillStyle = '#00104a';
        ctx.fillRect(x, y, 2, 1);
      }
    }
    band(0, 7, 1);
    band(41, 48, 0.5);
    band(48, 55, 1);
    band(89, 96, 0.5);
    band(96, 104, 1);
    band(138, 146, 0.45);

    // carriers that run through every period: x, colours
    const carriers = [
      [843, '#a87010'], [882, '#106a40'], [892, '#40603a'], [902, '#0a2470'], [945, '#1a6a50'],
      [1000, '#1a6a60'], [1086, '#d07060'], [1140, '#0a2a80'], [1181, '#208040'], [1182, '#d06020'],
      [1195, '#ffffff'], [1281, '#b0b060'], [1342, '#2a9030'], [1343, '#b07020'], [1390, '#ff3020'],
      [1417, '#123a80'], [1445, '#123a80'], [1476, '#1a7040']
    ];
    for (const [a, c] of carriers) {
      ctx.fillStyle = c;
      for (let y = 0; y < 146; y++) {
        if (rnd() > 0.08) ctx.fillRect(a - X0, y, 1, 1);
      }
    }

    // decoded signals: x1, x2, y1, y2, dots, fringe
    function cluster(x1, x2, y1, y2, n, halo) {
      const cols = ['#ffffff', '#ffffff', '#ffffff', '#ff5050', '#30c040', '#f09030'];
      if (halo) {
        for (let i = 0; i < n * 0.7; i++) {
          const x = x1 + rnd() * (x2 - x1) - X0;
          const y = y1 + rnd() * (y2 - y1) - 568;
          ctx.fillStyle = rnd() > 0.5 ? '#0a4a30' : '#0a2a60';
          ctx.fillRect(x - 4, y, 10, 1);
        }
      }
      for (let i = 0; i < n; i++) {
        const x = x1 + rnd() * (x2 - x1) - X0;
        const y = y1 + rnd() * (y2 - y1) - 568;
        ctx.fillStyle = cols[Math.floor(rnd() * cols.length)];
        ctx.fillRect(x, y, 2, 2);
      }
    }
    function tone(x, y1, y2, c, w) {
      ctx.fillStyle = c;
      for (let y = y1; y < y2; y++) {
        if (rnd() > 0.06) ctx.fillRect(x - X0, y - 568, w, 1);
      }
    }
    // first period
    cluster(968, 1000, 575, 608, 55, false); tone(966, 575, 608, '#ffd0d0', 2);
    cluster(1014, 1050, 576, 608, 95, true); tone(1012, 575, 608, '#ffffff', 2);
    cluster(1083, 1115, 576, 608, 55, false); tone(1080, 575, 608, '#ffffff', 2);
    tone(1218, 575, 608, '#ff9a80', 2); cluster(1220, 1255, 576, 608, 22, false);
    tone(1258, 575, 608, '#ffffff', 2); cluster(1260, 1297, 576, 608, 70, true);
    cluster(1492, 1495, 574, 608, 22, false);
    // second period
    cluster(968, 1002, 624, 656, 55, false); tone(967, 623, 656, '#ffffff', 2);
    cluster(1013, 1050, 624, 656, 85, true); tone(1011, 623, 656, '#ffffff', 2);
    cluster(1085, 1113, 624, 656, 40, false); tone(1080, 623, 656, '#808060', 2);
    tone(1215, 623, 656, '#ffffff', 2); cluster(1217, 1256, 624, 656, 75, true);
    tone(1258, 623, 656, '#ffffff', 2); cluster(1260, 1297, 624, 656, 95, true);
    cluster(1482, 1487, 625, 660, 70, false); cluster(1492, 1495, 622, 656, 24, false);
    cluster(924, 960, 640, 656, 14, false);
    // third period
    cluster(1012, 1047, 673, 705, 95, true); tone(1010, 672, 705, '#ffffff', 2);
    cluster(1050, 1075, 675, 704, 22, false); tone(1080, 672, 705, '#ffffff', 2);
    cluster(1085, 1113, 674, 704, 35, false);
    tone(1215, 672, 705, '#ffc0b0', 2); cluster(1217, 1250, 674, 704, 30, false);
    ctx.fillStyle = '#2a7a40';
    ctx.fillRect(1298 - X0, 689 - 568, 28, 1);
    ctx.fillRect(1298 - X0, 694 - 568, 28, 1);
    cluster(1309, 1314, 688, 696, 6, false);
    cluster(1482, 1487, 673, 706, 80, false); cluster(1492, 1495, 671, 704, 28, false);
    cluster(924, 960, 672, 702, 16, false);

    // yellow period markers
    ctx.fillStyle = '#eeee70';
    for (const y of [41, 48, 89, 96, 138, 145]) ctx.fillRect(0, y, 738, 1);

    // spectrum trace, traced from the picture (x, y absolute)
    const trace = '834,768 835,778 837,788 841,788 842,740 844,780 846,788 852,788 853,783 856,785 857,788 863,788 868,782 873,779 880,776 882,750 883,775 887,775 891,772 892,749 894,772 898,772 902,757 903,771 915,770 922,767 930,768 942,767 945,763 946,748 947,763 950,766 960,764 964,757 966,733 968,747 971,750 975,748 978,750 981,758 983,759 985,747 988,742 992,748 998,752 1001,762 1005,761 1008,753 1010,743 1012,714 1014,737 1018,733 1023,733 1025,742 1028,750 1032,735 1037,732 1040,739 1044,728 1047,752 1050,760 1057,757 1058,761 1068,762 1077,760 1080,730 1082,750 1085,755 1087,738 1090,753 1095,745 1098,752 1103,745 1108,742 1110,750 1113,750 1115,759 1135,759 1140,749 1143,759 1155,758 1168,757 1175,757 1178,755 1182,740 1184,755 1193,756 1195,727 1197,755 1215,757 1217,757 1218,738 1221,755 1223,753 1233,755 1243,753 1250,755 1256,752 1259,722 1261,740 1265,742 1268,750 1272,737 1276,747 1280,737 1286,750 1289,735 1293,752 1300,755 1320,755 1333,757 1335,752 1337,757 1342,747 1344,757 1367,757 1387,758 1389,735 1391,735 1393,757 1413,759 1417,752 1420,759 1442,759 1444,753 1447,759 1473,761 1476,747 1477,761 1492,761 1494,746 1497,761 1513,762 1516,758 1518,763 1530,763 1532,760 1535,763 1553,763 1563,761 1571,763';
    const spectrum = document.getElementById('spectrum');
    for (const y of [9, 20, 32, 42, 53, 64]) {
      add(spectrum, 'line', { x1: 0, x2: 738, y1: y + 0.5, y2: y + 0.5, stroke: '#fff', 'stroke-dasharray': '1.5 3' });
    }
    for (let f = 500; f <= 3500; f += 500) {
      const x = Math.round(fx(f)) + 0.5;
      add(spectrum, 'line', { x1: x, x2: x, y1: 0, y2: 75, stroke: '#fff', 'stroke-dasharray': '1.5 3' });
    }
    const pts = trace.split(' ').map(p => {
      const [x, y] = p.split(',');
      return (x - X0) + ',' + (y - 714);
    }).join(' ');
    add(spectrum, 'polyline', { points: pts, fill: 'none', stroke: '#00d820', 'stroke-width': 1.2 });
  </script>
</body>
</html>
